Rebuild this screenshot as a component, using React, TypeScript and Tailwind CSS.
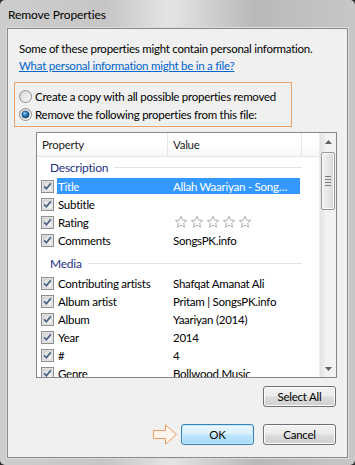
import React from "react";

const font = { fontFamily: 'Lato, "Liberation Sans", Arial, sans-serif' };

function CheckBox() {
  return (
    <svg width="13" height="13" viewBox="0 0 13 13" className="shrink-0">
      <defs>
        <linearGradient id="cbg" x1="0" y1="0" x2="1" y2="1">
          <stop offset="0" stopColor="#d8d8d8" />
          <stop offset="1" stopColor="#fbfbfb" />
        </linearGradient>
      </defs>
      <rect x="0.5" y="0.5" width="12" height="12" fill="#f4f4f4" stroke="#8e8f8f" />
      <rect x="2" y="2" width="9" height="9" fill="url(#cbg)" stroke="#b8b8b8" strokeWidth="0.6" />
      <path d="M3.2 6.4 L5.4 8.8 L9.8 3.4" fill="none" stroke="#4a5f86" strokeWidth="1.7" />
    </svg>
  );
}

function Radio({ on }: { on?: boolean }) {
  return (
    <svg width="13" height="13" viewBox="0 0 13 13" className="shrink-0">
      <defs>
        <linearGradient id="rbg" x1="0" y1="0" x2="1" y2="1">
          <stop offset="0" stopColor="#d4d4d4" />
          <stop offset="1" stopColor="#fbfbfb" />
        </linearGradient>
        <radialGradient id="rdot" cx="0.4" cy="0.35" r="0.7">
          <stop offset="0" stopColor="#9fd3f5" />
          <stop offset="0.45" stopColor="#2f7bbd" />
          <stop offset="1" stopColor="#0d3761" />
        </radialGradient>
      </defs>
      <circle cx="6.5" cy="6.5" r="6" fill="url(#rbg)" stroke="#8e8f8f" />
      {on && <circle cx="6.5" cy="6.5" r="3.6" fill="url(#rdot)" stroke="#1c4a78" strokeWidth="0.6" />}
    </svg>
  );
}

function Star() {
  return (
    <svg width="14" height="14" viewBox="0 0 14 14">
      <path
        d="M7 1.2 L8.7 5.1 L12.8 5.4 L9.7 8.1 L10.6 12.3 L7 10.1 L3.4 12.3 L4.3 8.1 L1.2 5.4 L5.3 5.1 Z"
        fill="#fbfbfb"
        stroke="#b3b3b3"
        strokeWidth="1"
        strokeLinejoin="round"
      />
    </svg>
  );
}

function Row({ name, value, selected, stars }: { name: string; value?: string; selected?: boolean; stars?: boolean }) {
  return (
    <div className="flex items-center h-[18px] pl-[4px] shrink-0">
      <CheckBox />
      <div className={"ml-[3px] flex items-center h-[16px] w-[243px] " + (selected ? "bg-[#3399ff] text-white" : "text-black")}>
        <div className="w-[111px] pl-[1px] whitespace-nowrap">{name}</div>
        <div className="w-[132px] pl-[5px] whitespace-nowrap overflow-hidden flex items-center">
          {stars ? (
            <div className="flex gap-[2px] ml-[1px]">
              <Star />
              <Star />
              <Star />
              <Star />
              <Star />
            </div>
          ) : (
            value
          )}
        </div>
      </div>
    </div>
  );
}

function Group({ label, first }: { label: string; first?: boolean }) {
  return (
    <div className={"flex items-center h-[20px] pl-[13px] w-[265px] shrink-0 " + (first ? "" : "mt-[4px] mb-[1px]")}>
      <span className="text-[#1e3287] text-[12px] whitespace-nowrap">{label}</span>
      <div className="flex-1 h-px bg-[#dfe3ea] ml-[6px]" />
    </div>
  );
}

function Button({ label, def }: { label: string; def?: boolean }) {
  return (
    <div
      className={
        "w-[73px] h-[21px] rounded-[3px] border flex items-center justify-center text-black " +
        (def
          ? "border-[#3c7fb1] bg-[linear-gradient(180deg,#eaf6fd_0%,#d9f0fc_48%,#bee6fd_52%,#a7d9f5_100%)] shadow-[inset_0_0_0_1px_#c6e8fa]"
          : "border-[#707070] bg-[linear-gradient(180deg,#f2f2f2_0%,#ebebeb_48%,#dddddd_52%,#cfcfcf_100%)] shadow-[inset_0_0_0_1px_#fcfcfc]")
      }
    >
      {label}
    </div>
  );
}

export default function App() {
  return (
    <div className="w-[355px] h-[465px] bg-[#2a2a2a] text-[11.5px] leading-[17px] tracking-[-0.25px]" style={font}>
      <div className="w-full h-full rounded-[5px] flex flex-col overflow-hidden bg-[linear-gradient(90deg,#cdcdcd_0%,#c6c6c6_30%,#e4e4e4_48%,#d2d2d2_58%,#b9b9b9_72%,#c7c7c7_100%)]">
        {/* title bar */}
        <div className="h-[28px] pl-[8px] pt-[6px] text-black shrink-0 text-[12px] tracking-[-0.1px]">Remove Properties</div>
        {/* client */}
        <div className="mx-[7px] mb-[7px] flex-1 border border-[#8a8a8a] bg-[#f0f0f0] flex flex-col shadow-[0_0_0_1px_#dcdcdc]">
          <div className="mt-[11px] ml-[11px] text-black whitespace-nowrap">Some of these properties might contain personal information.</div>
          <div className="ml-[11px] text-[#0066cc] underline whitespace-nowrap w-fit">What personal information might be in a file?</div>

          <div className="mt-[8px] ml-[6px] w-[278px] h-[45px] border border-[#eba168] pt-[4px] pl-[4px]">
            <div className="flex items-center h-[18px] gap-[3px] whitespace-nowrap">
              <Radio />
              <span>Create a copy with all possible properties removed</span>
            </div>
            <div className="flex items-center h-[18px] gap-[3px] whitespace-nowrap">
              <Radio on />
              <span>Remove the following properties from this file:</span>
            </div>
          </div>

          {/* list */}
          <div className="mt-[5px] ml-[28px] w-[301px] h-[246px] shrink-0 border border-[#828790] bg-white flex overflow-hidden">
            <div className="flex-1 flex flex-col overflow-hidden">
              <div className="h-[24px] shrink-0 flex border-b border-[#e5e5e5] bg-[linear-gradient(180deg,#ffffff_0%,#ffffff_50%,#f6f7f8_100%)] text-[#1e1e1e]">
                <div className="w-[131px] pl-[5px] flex items-center border-r border-[#e5e5e5]">Property</div>
                <div className="w-[134px] pl-[5px] flex items-center border-r border-[#e5e5e5]">Value</div>
                <div className="flex-1" />
              </div>
              <div className="flex flex-col">
                <Group label="Description" first />
                <Row name="Title" value="Allah Waariyan - Song…" selected />
                <Row name="Subtitle" value="" />
                <Row name="Rating" stars />
                <Row name="Comments" value="SongsPK.info" />
                <Group label="Media" />
                <Row name="Contributing artists" value="Shafqat Amanat Ali" />
                <Row name="Album artist" value="Pritam | SongsPK.info" />
                <Row name="Album" value="Yaariyan (2014)" />
                <Row name="Year" value="2014" />
                <Row name="#" value="4" />
                <Row name="Genre" value="Bollwood Music" />
              </div>
            </div>
            {/* scrollbar */}
            <div className="w-[17px] shrink-0 flex flex-col bg-[linear-gradient(90deg,#e3e3e3_0%,#f3f3f3_40%,#f1f1f1_100%)] border-l border-[#ececec]">
              <div className="h-[17px] flex items-center justify-center">
                <svg width="7" height="4" viewBox="0 0 7 4">
                  <path d="M0 4 L3.5 0 L7 4 Z" fill="#5f5f5f" />
                </svg>
              </div>
              <div className="mt-[2px] mx-[1px] h-[58px] rounded-[2px] border border-[#979797] bg-[linear-gradient(90deg,#f0f0f0_0%,#e6e6e6_50%,#d6d6d6_100%)] shadow-[inset_0_0_0_1px_#fbfbfb] flex flex-col items-center justify-center gap-[2px]">
                <div className="w-[6px] h-px bg-[#7b7b7b]" />
                <div className="w-[6px] h-px bg-[#7b7b7b]" />
                <div className="w-[6px] h-px bg-[#7b7b7b]" />
                <div className="w-[6px] h-px bg-[#7b7b7b]" />
              </div>
              <div className="flex-1" />
              <div className="h-[17px] flex items-center justify-center">
                <svg width="7" height="4" viewBox="0 0 7 4">
                  <path d="M0 0 L3.5 4 L7 0 Z" fill="#5f5f5f" />
                </svg>
              </div>
            </div>
          </div>

          <div className="mt-[8px] mr-[11px] flex justify-end">
            <Button label="Select All" />
          </div>

          <div className="mt-[17px] mr-[11px] flex justify-end items-center">
            <svg width="25" height="21" viewBox="0 0 25 21" className="mr-[3px]">
              <path
                d="M0.5 6.5 L12.5 6.5 L12.5 0.8 L23.5 10.5 L12.5 20.2 L12.5 14.5 L0.5 14.5 Z"
                fill="#fdf5ee"
                stroke="#ef9a5a"
                strokeWidth="1"
                strokeLinejoin="miter"
              />
            </svg>
            <Button label="OK" def />
            <div className="w-[9px]" />
            <Button label="Cancel" />
          </div>
        </div>
      </div>
    </div>
  );
}
